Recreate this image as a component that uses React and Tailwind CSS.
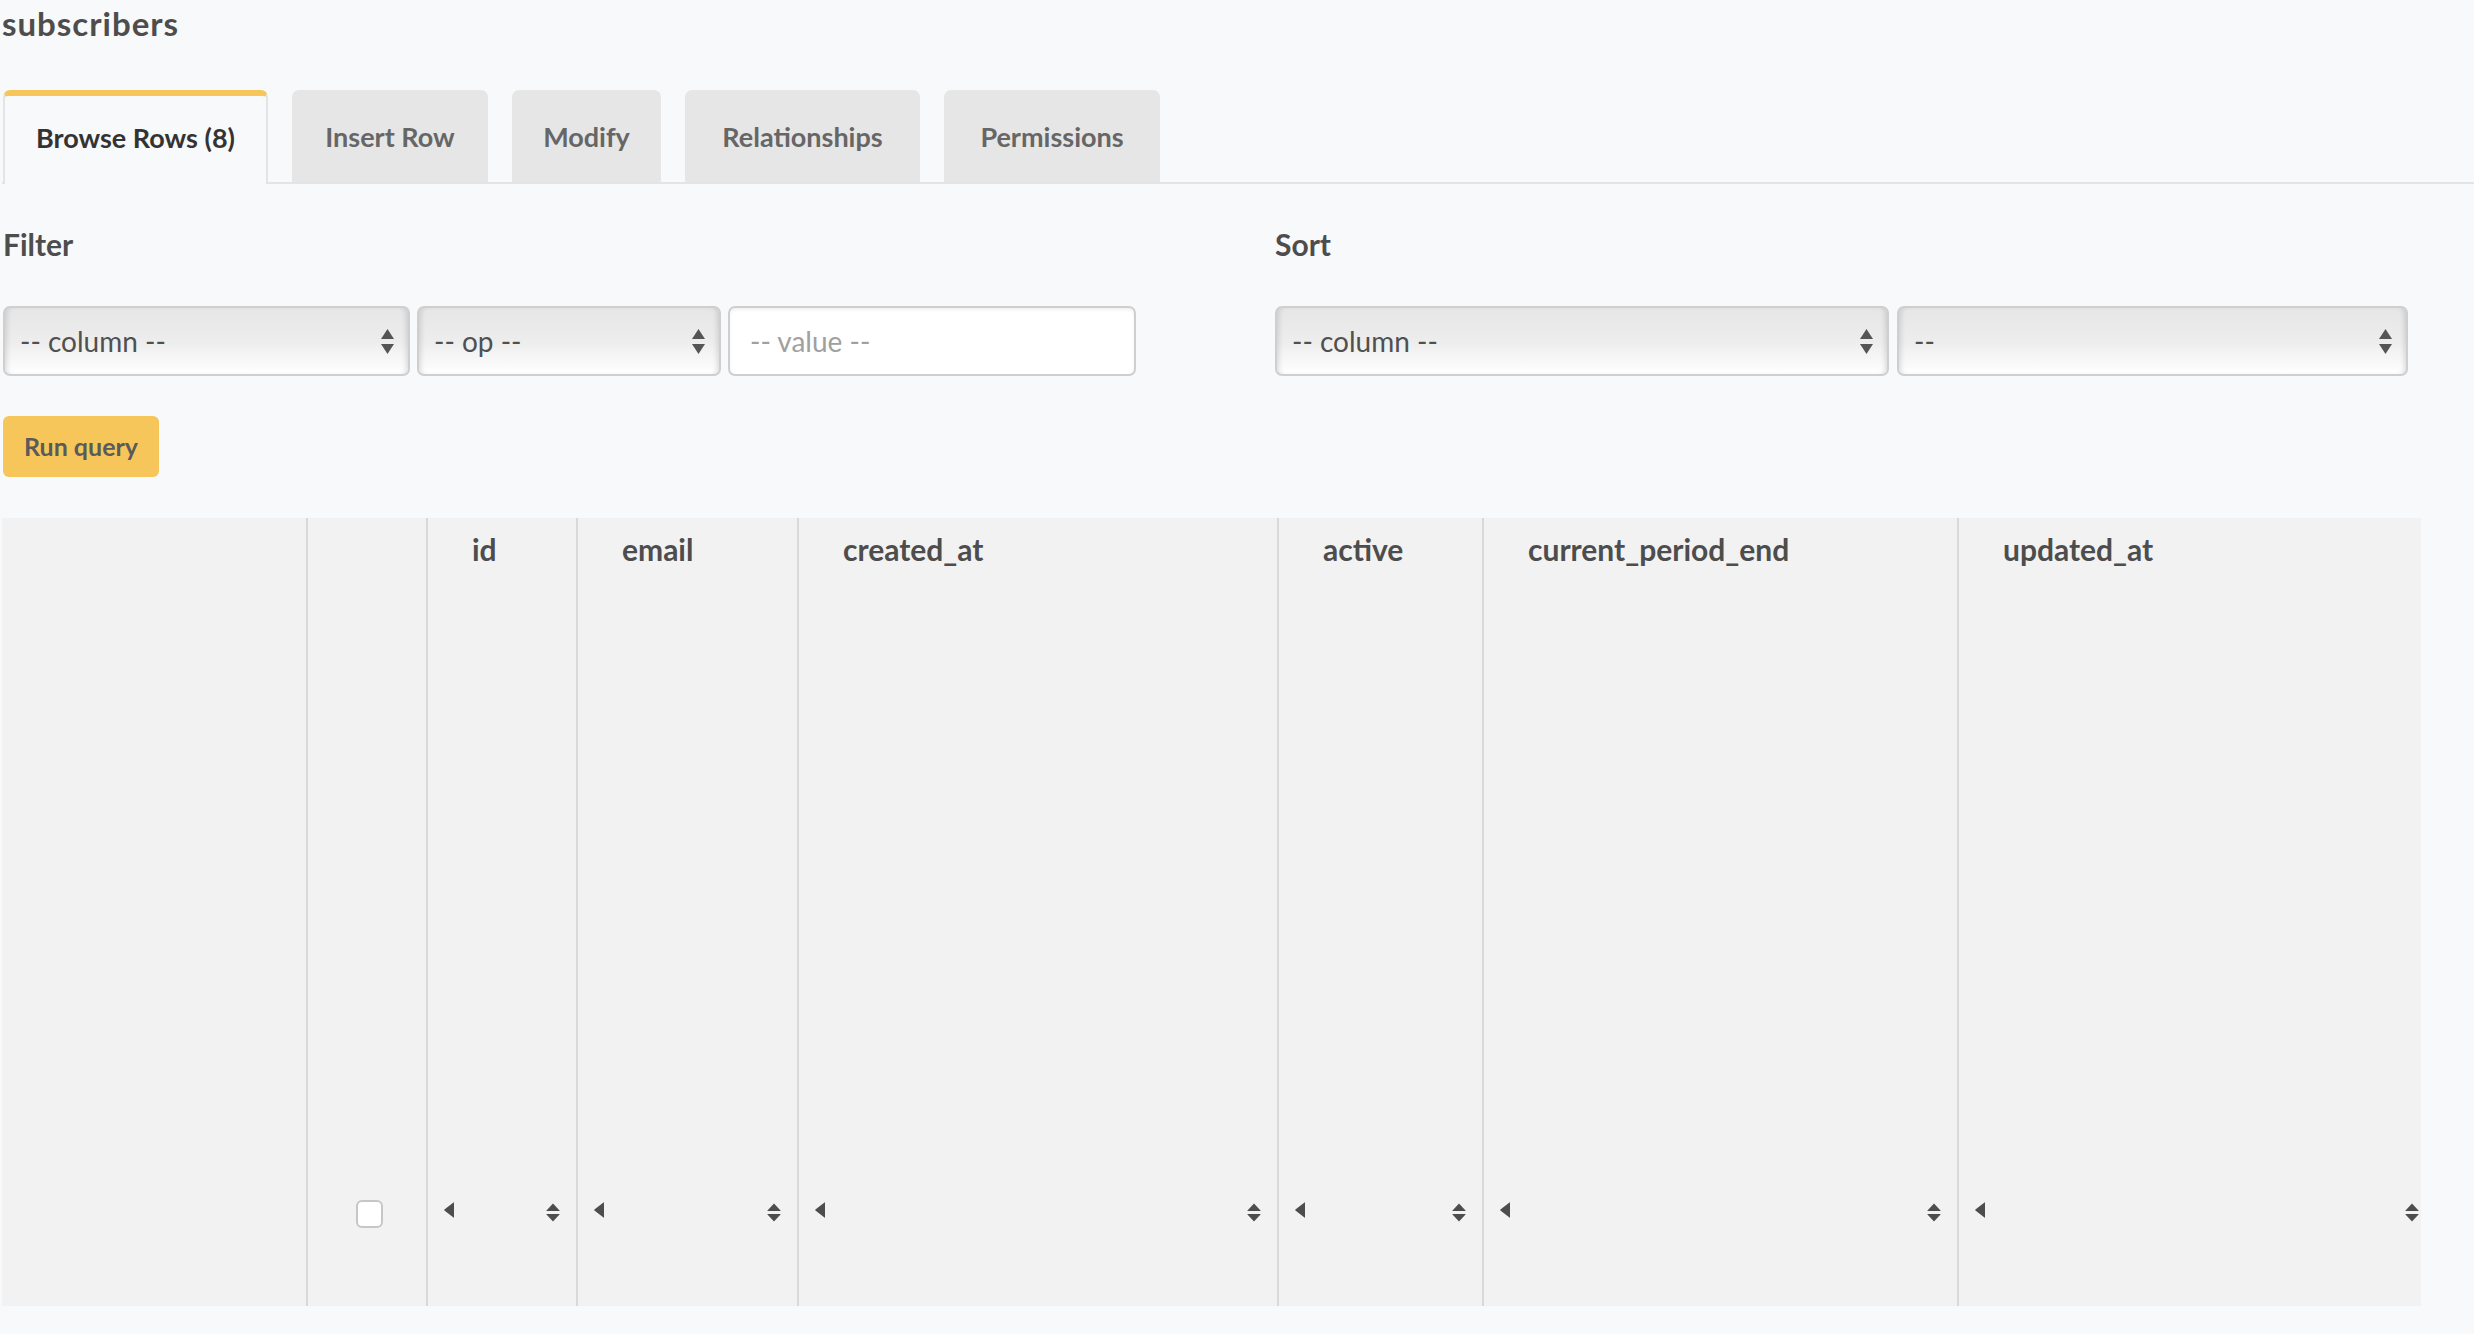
import React from "react";

const font = "font-['Lato','Open_Sans',sans-serif]";

const tabs = [
  { label: "Browse Rows (8)", width: "w-[265px]", active: true },
  { label: "Insert Row", width: "w-[196px]" },
  { label: "Modify", width: "w-[149px]" },
  { label: "Relationships", width: "w-[235px]" },
  { label: "Permissions", width: "w-[216px]" },
];

const columns = [
  { name: "id", width: "w-[150px]" },
  { name: "email", width: "w-[221px]" },
  { name: "created_at", width: "w-[480px]" },
  { name: "active", width: "w-[205px]" },
  { name: "current_period_end", width: "w-[475px]" },
  { name: "updated_at", width: "w-[464px]", last: true },
];

const UpDown = ({ className = "" }) => (
  <svg viewBox="0 0 13 25" className={className} fill="#555">
    <path d="M6.5 0 L13 10 H0 Z" />
    <path d="M0 15 H13 L6.5 25 Z" />
  </svg>
);

const SortIcon = () => (
  <svg viewBox="0 0 14 19" className="w-[14px] h-[19px]" fill="#4d4d4d">
    <path d="M7 0.5 L13.5 7.5 Q14 8 13.3 8 H0.7 Q0 8 0.5 7.5 Z" />
    <path d="M0.7 11 H13.3 Q14 11 13.5 11.5 L7 18.5 L0.5 11.5 Q0 11 0.7 11 Z" />
  </svg>
);

const CaretLeft = () => (
  <svg viewBox="0 0 10 16" className="w-[10px] h-[16px]" fill="#4d4d4d">
    <path d="M10 0.5 V15.5 Q10 16 9.5 15.6 L0.4 8.4 Q0 8 0.4 7.6 L9.5 0.4 Q10 0 10 0.5 Z" />
  </svg>
);

const Select = ({ label, width }) => (
  <div
    className={`${width} h-[70px] flex items-center justify-between pl-[15px] pr-[14px] rounded-[7px] border-2 border-[#cfcfcf] bg-linear-to-b from-[#e6e6e6] via-[#ededed] to-white shadow-[inset_5px_0_5px_-3px_rgba(0,0,0,0.12),inset_-5px_0_5px_-3px_rgba(0,0,0,0.12)]`}
  >
    <span className="text-[28px] leading-none text-[#505050]">{label}</span>
    <UpDown className="w-[13px] h-[25px]" />
  </div>
);

export default function App() {
  return (
    <div className={`${font} min-h-screen bg-[#f8f9fa] pl-[2px] text-[#4a4a4a]`}>
      <h1 className="pt-[7px] text-[33px] leading-none font-bold tracking-[1px] text-[#4d4d4d]">
        subscribers
      </h1>

      {/* Tabs */}
      <div className="mt-[50px] flex items-end gap-[24px] border-b-2 border-[#e3e4e6] pl-[1px] h-[92px] box-content">
        {tabs.map((tab) =>
          tab.active ? (
            <div
              key={tab.label}
              className={`${tab.width} h-[94px] -mb-[2px] pb-[6px] flex items-center justify-center rounded-t-[7px] border-t-[6px] border-x-2 border-t-[#f7c65a] border-x-[#e3e4e6] bg-[#f8f9fa] text-[27px] leading-none font-bold text-[#333333]`}
            >
              {tab.label}
            </div>
          ) : (
            <div
              key={tab.label}
              className={`${tab.width} h-[92px] flex items-center justify-center rounded-t-[7px] bg-[#e6e6e6] text-[27px] leading-none font-bold text-[#666666]`}
            >
              {tab.label}
            </div>
          )
        )}
      </div>

      {/* Filter + Sort */}
      <div className="mt-[45px] flex">
        <div className="w-[1273px] pl-[1px]">
          <div className="text-[30px] leading-none font-bold text-[#4d4d4d]">Filter</div>
          <div className="mt-[47px] flex gap-[7px]">
            <Select label="-- column --" width="w-[407px]" />
            <Select label="-- op --" width="w-[304px]" />
            <div className="w-[408px] h-[70px] flex items-center pl-[20px] rounded-[7px] border-2 border-[#cfcfcf] bg-white shadow-[inset_0_2px_3px_rgba(0,0,0,0.06)]">
              <span className="text-[28px] leading-none text-[#a0a0a0]">-- value --</span>
            </div>
          </div>
        </div>
        <div>
          <div className="text-[30px] leading-none font-bold text-[#4d4d4d]">Sort</div>
          <div className="mt-[47px] flex gap-[8px]">
            <Select label="-- column --" width="w-[614px]" />
            <Select label="--" width="w-[511px]" />
          </div>
        </div>
      </div>

      <button className="mt-[40px] ml-[1px] h-[61px] px-[21px] rounded-[6px] bg-[#f7c65a] text-[25px] leading-none font-bold text-[#5a5a5a]">
        Run query
      </button>

      {/* Table */}
      <div className="mt-[41px] flex h-[788px] w-[2419px] bg-[#f2f2f2] overflow-hidden">
        <div className="w-[304px] shrink-0" />
        <div className="w-[120px] shrink-0 border-l-2 border-[#d9d9d9] flex flex-col justify-end pb-[78px] pl-[48px]">
          <div className="w-[27px] h-[28px] rounded-[6px] border-2 border-[#c6c6c6] bg-white" />
        </div>
        {columns.map((col) => (
          <div
            key={col.name}
            className={`${col.width} shrink-0 border-l-2 border-[#d9d9d9] flex flex-col justify-between`}
          >
            <div className="pt-[16px] pl-[44px] text-[30px] leading-none font-bold text-[#4d4d4d]">
              {col.name}
            </div>
            <div
              className={`flex items-center justify-between pl-[16px] ${col.last ? "pr-[2px]" : "pr-[16px]"} pb-[84px]`}
            >
              <div className="-mt-[6px]">
                <CaretLeft />
              </div>
              <SortIcon />
            </div>
          </div>
        ))}
      </div>
    </div>
  );
}
